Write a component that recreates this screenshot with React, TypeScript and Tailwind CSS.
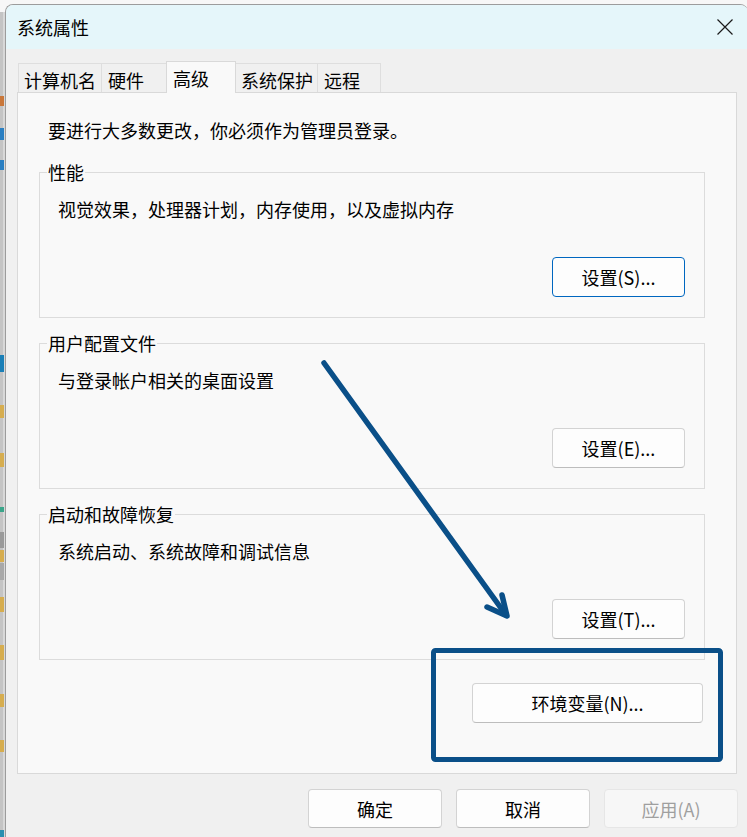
import React from "react";

type TabDef = { label: string; w: string; pl: string; selected?: boolean; noLeft?: boolean; last?: boolean };

const tabs: TabDef[] = [
  { label: "计算机名", w: "w-[83px]", pl: "pl-[5px]" },
  { label: "硬件", w: "w-[65px]", pl: "pl-[6px]" },
  { label: "高级", w: "w-[70px]", pl: "pl-[6px]", selected: true },
  { label: "系统保护", w: "w-[81px]", pl: "pl-[5px]", noLeft: true },
  { label: "远程", w: "w-[64px]", pl: "pl-[6px]", last: true },
];

function Tab({ t }: { t: TabDef }) {
  if (t.selected) {
    return (
      <div
        className={`${t.w} ${t.pl} relative z-10 h-[32px] border-l border-t border-r border-[#d9d9d9] bg-[#f9f9f9] pt-[4px] leading-[24px]`}
      >
        {t.label}
      </div>
    );
  }
  return (
    <div
      className={`${t.w} ${t.pl} mt-[2px] h-[29px] border-t border-[#dedede] bg-[#f0f0f0] pt-[4px] leading-[24px] ${
        t.noLeft ? "" : "border-l"
      } ${t.last ? "border-r" : ""}`}
    >
      {t.label}
    </div>
  );
}

function Btn({
  children,
  w,
  h = "h-[40px]",
  focused,
  disabled,
  className = "",
}: {
  children: React.ReactNode;
  w: string;
  h?: string;
  focused?: boolean;
  disabled?: boolean;
  className?: string;
}) {
  const base = `${w} ${h} ${className} flex items-center justify-center rounded-[4px] border text-[18px] leading-[24px]`;
  if (disabled) {
    return (
      <button className={`${base} border-[#e6e6e6] bg-[#f7f7f7] text-[#9f9f9f]`} disabled>
        {children}
      </button>
    );
  }
  if (focused) {
    return <button className={`${base} border-[#0067c0] bg-[#fdfdfd] text-black`}>{children}</button>;
  }
  return (
    <button className={`${base} border-[#d3d3d3] border-b-[#bdbdbd] bg-[#fdfdfd] text-black`}>
      {children}
    </button>
  );
}

function Group({
  legend,
  body,
  button,
  focused,
  className = "",
}: {
  legend: string;
  body: string;
  button: string;
  focused?: boolean;
  className?: string;
}) {
  return (
    <fieldset className={`ml-[21px] w-[666px] border border-[#dcdcdc] ${className}`}>
      <legend className="ml-[7px] px-[1px] text-[18px] leading-[24px]">{legend}</legend>
      <div className="flex flex-col pt-[13px] pb-[20px] pl-[18px] pr-[19px]">
        <div className="text-[18px] leading-[24px]">{body}</div>
        <Btn w="w-[133px]" className="self-end mt-[36px]" focused={focused}>
          {button}
        </Btn>
      </div>
    </fieldset>
  );
}

function DesktopStrip() {
  const blocks: [number, number, string][] = [
    [96, 10, "#c9773a"],
    [128, 12, "#2a7fc2"],
    [160, 10, "#2a7fc2"],
    [355, 17, "#1a7fb7"],
    [405, 13, "#d6ad4f"],
    [453, 14, "#d6ad4f"],
    [507, 5, "#3aa58a"],
    [532, 16, "#9a9a9a"],
    [550, 12, "#d6ad4f"],
    [563, 17, "#a8a8a8"],
    [597, 15, "#d6ad4f"],
    [645, 15, "#d6ad4f"],
    [694, 13, "#d6ad4f"],
    [740, 12, "#d6ad4f"],
    [830, 7, "#2a8fb0"],
  ];
  return (
    <svg width="5" height="837" viewBox="0 0 5 837" className="shrink-0">
      <rect x="0" y="12" width="5" height="825" fill="#c4c4c4" />
      <rect x="3" y="12" width="2" height="825" fill="#d8d8d8" />
      {blocks.map(([y, h, c], i) => (
        <rect key={i} x="0" y={y} width="4" height={h} fill={c} />
      ))}
    </svg>
  );
}

export default function App() {
  return (
    <div className="relative flex h-[837px] w-[747px] overflow-hidden bg-[#f7f7f7] font-['Noto_Sans_CJK_SC','Noto_Sans',sans-serif] text-black">
      <DesktopStrip />
      <div className="mt-[4px] flex h-[833px] w-[743px] shrink-0 flex-col overflow-hidden rounded-t-[8px] border-l border-t border-[#9c9c9c] bg-[#f0f0f0]">
        {/* title bar */}
        <div className="flex h-[44px] shrink-0 items-center justify-between bg-[#e5f6fa] pl-[11px] pr-[15px]">
          <span className="text-[18px] leading-[24px]">系统属性</span>
          <svg width="16" height="16" viewBox="0 0 16 16">
            <path d="M0.5 0.5 L15.5 15.5 M15.5 0.5 L0.5 15.5" stroke="#1b1b1b" strokeWidth="1.2" fill="none" />
          </svg>
        </div>

        {/* body */}
        <div className="flex flex-col pl-[11px] pt-[12px]">
          <div className="ml-[1px] flex items-start text-[18px]">
            {tabs.map((t) => (
              <Tab key={t.label} t={t} />
            ))}
          </div>

          <div className="-mt-px flex h-[682px] w-[720px] flex-col border border-[#d9d9d9] bg-[#f9f9f9]">
            <div className="ml-[30px] mt-[25px] text-[18px] leading-[24px]">
              要进行大多数更改，你必须作为管理员登录。
            </div>
            <Group
              className="mt-[18px]"
              legend="性能"
              body="视觉效果，处理器计划，内存使用，以及虚拟内存"
              button="设置(S)..."
              focused
            />
            <Group className="mt-[13px]" legend="用户配置文件" body="与登录帐户相关的桌面设置" button="设置(E)..." />
            <Group
              className="mt-[13px]"
              legend="启动和故障恢复"
              body="系统启动、系统故障和调试信息"
              button="设置(T)..."
            />
            <Btn w="w-[231px]" className="mt-[23px] mr-[33px] self-end">
              环境变量(N)...
            </Btn>
          </div>

          <div className="mt-[15px] flex w-[721px] justify-end gap-[14px]">
            <Btn w="w-[134px]" h="h-[39px]">
              确定
            </Btn>
            <Btn w="w-[134px]" h="h-[39px]">
              取消
            </Btn>
            <Btn w="w-[134px]" h="h-[39px]" disabled>
              应用(A)
            </Btn>
          </div>
        </div>
      </div>

      {/* annotation overlay */}
      <svg
        className="pointer-events-none absolute left-0 top-0"
        width="747"
        height="837"
        viewBox="0 0 747 837"
      >
        <rect x="433.5" y="650.5" width="287" height="109" rx="2" fill="none" stroke="#0a4f88" strokeWidth="5" />
        <line x1="324" y1="363" x2="506" y2="615" stroke="#0a4f88" strokeWidth="5.5" strokeLinecap="round" />
        <polyline
          points="502,595 507,616 487,607"
          fill="none"
          stroke="#0a4f88"
          strokeWidth="5.5"
          strokeLinecap="round"
          strokeLinejoin="round"
        />
      </svg>
    </div>
  );
}
